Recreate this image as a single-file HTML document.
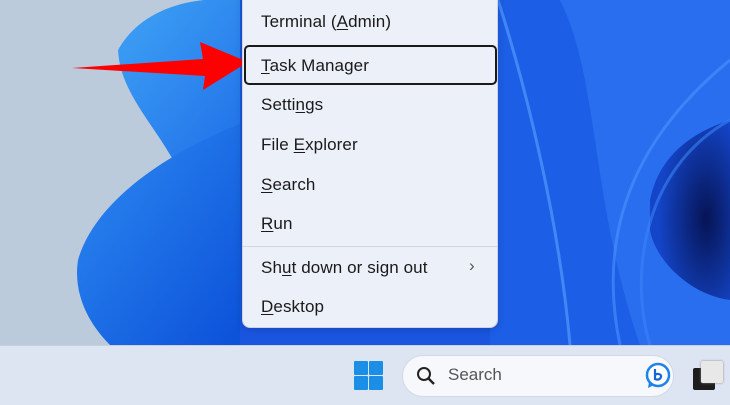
<!DOCTYPE html>
<html><head><style>
*{margin:0;padding:0;box-sizing:border-box}
body{width:730px;height:405px;overflow:hidden;position:relative;background:#bccbdc;font-family:"Segoe UI","Liberation Sans",sans-serif}
#wp{position:absolute;left:0;top:0}
.menu{position:absolute;left:242px;top:-10px;width:256px;height:338px;background:#ecf0f9;border:1px solid #cdd3de;border-radius:8px;box-shadow:0 2px 8px rgba(0,0,0,.15)}
.it{position:absolute;left:18px;font-size:17px;color:#1a1a1a;letter-spacing:.1px}
.it u{text-decoration:underline;text-underline-offset:2px}
.sel{position:absolute;left:1px;top:54px;width:253px;height:40px;border:2px solid #1a1a1a;border-radius:5px}
.sep{position:absolute;left:0;right:0;top:255px;height:1px;background:#d2d7e0}
.tb{position:absolute;left:0;top:345px;width:730px;height:60px;background:#dde4f2;border-top:1px solid #c8d0e0}
.srch{position:absolute;left:402px;top:355px;width:272px;height:42px;border-radius:21px;background:#f7f8fc;border:1px solid #d3d8e3}
</style></head><body>
<svg id="wp" width="730" height="345" viewBox="0 0 730 345">
<defs>
<linearGradient id="g1" x1="0" y1="0" x2="1" y2="1"><stop offset="0" stop-color="#3fa3f5"/><stop offset="1" stop-color="#1f6ee8"/></linearGradient>
<linearGradient id="g2" x1="0" y1="0" x2="1" y2="1"><stop offset="0" stop-color="#2f8cf2"/><stop offset="1" stop-color="#0a4fd8"/></linearGradient>
<radialGradient id="g3" cx=".7" cy=".55" r=".6"><stop offset="0" stop-color="#061455"/><stop offset="1" stop-color="#1445c8"/></radialGradient>
</defs>
<path d="M118,50 C140,10 190,-5 240,0 L250,0 L250,140 C220,150 190,155 172,158 C150,120 120,90 118,50Z" fill="url(#g1)"/>
<path d="M250,120 C170,150 95,200 78,260 C72,300 95,330 110,345 L250,345Z" fill="url(#g2)"/>
<rect x="240" y="0" width="270" height="345" fill="#1a55e0"/>
<rect x="490" y="0" width="240" height="345" fill="#1d5ee6"/>
<path d="M560,0 C600,80 590,200 640,345 L730,345 L730,0Z" fill="#2a6ef0"/>
<path d="M650,200 C660,150 700,130 730,120 L730,300 C690,295 655,260 650,230Z" fill="url(#g3)"/>
<path d="M498,0 C530,100 560,230 570,345" stroke="#5aa4ff" stroke-width="3" fill="none" opacity=".6"/>
<path d="M620,345 C600,250 620,150 730,60" stroke="#4b92ff" stroke-width="3" fill="none" opacity=".6"/>
<path d="M650,345 C630,280 640,170 730,120" stroke="#3b82f6" stroke-width="3" fill="none" opacity=".6"/>
<path d="M72,68 L203,59 L200,42 L248,62 L203,90 L205,76Z" fill="#ff0000"/>
</svg>
<div class="menu">
<div class="it" style="top:21px">Terminal (<u>A</u>dmin)</div>
<div class="sel"></div>
<div class="it" style="top:65px"><u>T</u>ask Manager</div>
<div class="it" style="top:104px">Setti<u>n</u>gs</div>
<div class="it" style="top:144px">File <u>E</u>xplorer</div>
<div class="it" style="top:184px"><u>S</u>earch</div>
<div class="it" style="top:223px"><u>R</u>un</div>
<div class="sep"></div>
<div class="it" style="top:267px">Sh<u>u</u>t down or sign out</div>
<div class="it" style="top:265px;left:226px;color:#555">›</div>
<div class="it" style="top:306px"><u>D</u>esktop</div>
</div>
<div class="tb"></div>
<svg style="position:absolute;left:354px;top:361px" width="30" height="30"><g fill="#1b8fe6"><rect x="0" y="0" width="14" height="14" rx="1"/><rect x="15" y="0" width="14" height="14" rx="1"/><rect x="0" y="15" width="14" height="14" rx="1"/><rect x="15" y="15" width="14" height="14" rx="1"/></g></svg>
<div class="srch"></div>
<svg style="position:absolute;left:416px;top:366px" width="20" height="20"><circle cx="8" cy="8" r="6" stroke="#222" stroke-width="2" fill="none"/><path d="M12.5,12.5 L18,18" stroke="#222" stroke-width="2.4"/></svg>
<div style="position:absolute;left:448px;top:365px;font-size:17px;color:#555">Search</div>
<svg style="position:absolute;left:645px;top:362px" width="26" height="28"><circle cx="13" cy="13" r="11" fill="#fff" stroke="#1c84e8" stroke-width="2.5"/><path d="M4,20 L3,26 L9,23" fill="#1c84e8"/><path d="M10,7 L10,18 M10,13 C12,11 17,12 16,15 C15,18 12,18 10,17" stroke="#1565d8" stroke-width="2.2" fill="none"/></svg>
<div style="position:absolute;left:693px;top:368px;width:22px;height:22px;background:#1d1d1d;border-radius:2px"></div>
<div style="position:absolute;left:701px;top:361px;width:22px;height:22px;background:#e8e8e8;border-radius:2px;box-shadow:0 0 2px #888"></div>
</body></html>
